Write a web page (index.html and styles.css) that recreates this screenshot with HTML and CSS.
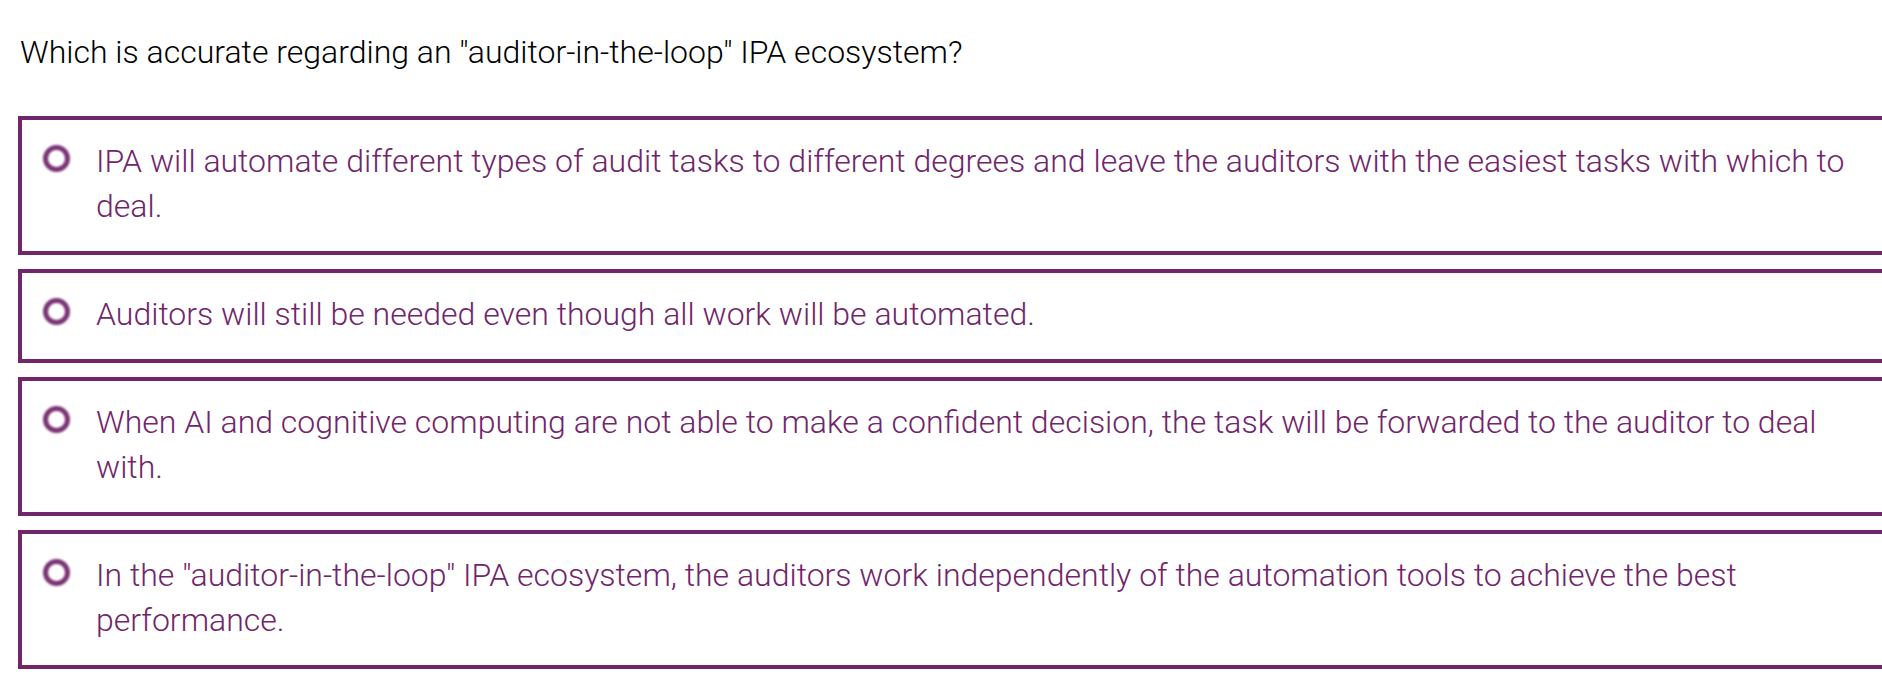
FILE: index.html
```html
<!DOCTYPE html>
<html lang="en">
<head>
<meta charset="utf-8">
<title>Quiz question</title>
<link rel="stylesheet" href="styles.css">
</head>
<body>
<div class="page">
  <p class="question">Which is accurate regarding an "auditor-in-the-loop" IPA ecosystem?</p>
  <div class="options">
    <label class="option">
      <span class="radio"></span>
      <span class="option-text">IPA will automate different types of audit tasks to different degrees and leave the auditors with the easiest tasks with which to deal.</span>
    </label>
    <label class="option">
      <span class="radio"></span>
      <span class="option-text">Auditors will still be needed even though all work will be automated.</span>
    </label>
    <label class="option">
      <span class="radio"></span>
      <span class="option-text">When AI and cognitive computing are not able to make a confident decision, the task will be forwarded to the auditor to deal with.</span>
    </label>
    <label class="option">
      <span class="radio"></span>
      <span class="option-text">In the "auditor-in-the-loop" IPA ecosystem, the auditors work independently of the automation tools to achieve the best performance.</span>
    </label>
  </div>
</div>
</body>
</html>
```

FILE: styles.css
```css
html, body {
  margin: 0;
  padding: 0;
  background: #ffffff;
  overflow: hidden;
}

.page {
  width: 1882px;
  overflow: hidden;
  padding: 30px 0 0 18px;
  box-sizing: border-box;
  font-family: Roboto, "Liberation Sans", Arial, sans-serif;
  font-size: 32px;
  line-height: 45px;
}

.question {
  margin: 0 0 41px 0;
  padding-left: 2px;
  color: #000000;
  font-weight: 300;
}

.options {
  display: flex;
  flex-direction: column;
  gap: 14px;
  width: 1886px;
}

.option {
  display: flex;
  align-items: flex-start;
  border: 4px solid #71266b;
  padding: 19px 40px 22px 21px;
  color: #71266b;
  font-weight: 300;
  cursor: pointer;
}

.radio {
  flex: none;
  width: 27px;
  height: 27px;
  box-sizing: border-box;
  border: 5px solid #7a3374;
  border-radius: 50%;
  margin-top: 6px;
  margin-right: 26px;
  filter: blur(0.8px);
}

.option-text {
  flex: 1;
}
```
